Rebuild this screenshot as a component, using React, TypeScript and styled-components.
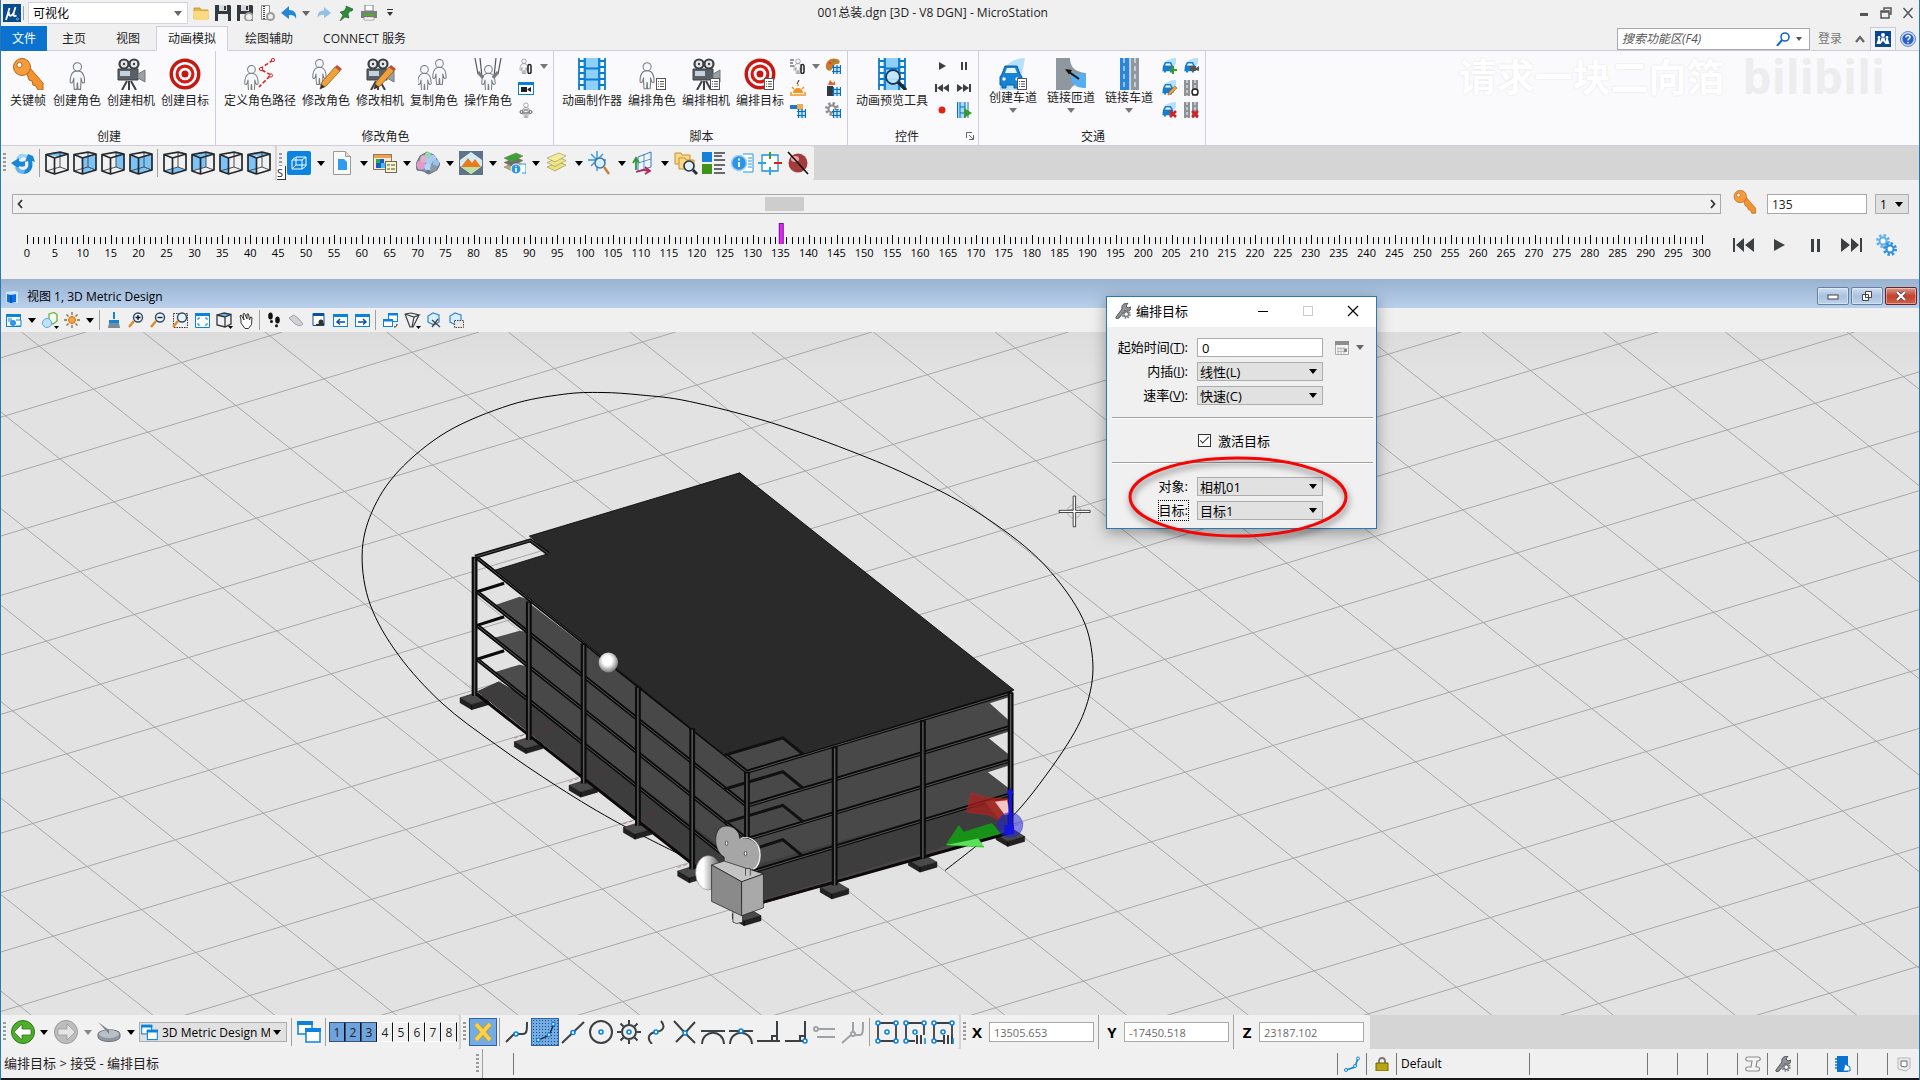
import React from "react";
import styled, { createGlobalStyle, css } from "styled-components";

const GlobalStyle = createGlobalStyle`
  *, *::before, *::after { box-sizing: border-box; }
  body { margin: 0; background: #f0f0f0; }
  body, button, input, select {
    font-family: "Open Sans", "Noto Sans CJK SC", sans-serif;
    font-size: 12px;
    color: #1e1e1e;
  }
  button { border: 0; background: none; padding: 0; cursor: default; }
  svg { display: block; flex: none; }
`;

/* ------------------------------------------------------------------ */
/* Icons                                                               */
/* ------------------------------------------------------------------ */

type Draw = React.ReactNode;

const INK = "#3c4043";
const BLUE = "#0a84d8";
const SKY = "#7cc4f8";

const Svg = ({ w, h = w, box = `0 0 ${w} ${h}`, children }: { w: number; h?: number; box?: string; children: Draw }) => (
  <svg width={w} height={h} viewBox={box} fill="none" aria-hidden="true">
    {children}
  </svg>
);

const CaretGlyph = ({ color = "#000" }: { color?: string }) => (
  <Svg w={8} h={5}>
    <path d="M0 0h8L4 5z" fill={color} />
  </Svg>
);

const Person = ({ t = "" }: { t?: string }) => (
  <g transform={t} stroke="#777b80" strokeWidth="1.2" fill="#f6f7f8" strokeLinejoin="round">
    <path d="M12 12c2-1 6-1 8 0 3 2 4 6 4 11 0 2-2 2-3 0l-1-4v5l-.5 7.500h-3l-.3-7h-.4l-.3 7h-3L12 24v-5l-1 4c-1 2-3 2-3 0 0-5 1-9 4-11z" />
    <circle cx="16" cy="6.500" r="4.600" />
  </g>
);

const Camera = () => (
  <g>
    <circle cx="9" cy="6" r="4.500" stroke={INK} strokeWidth="2.200" fill="#e6e8ea" />
    <circle cx="19" cy="6" r="4.500" stroke={INK} strokeWidth="2.200" fill="#e6e8ea" />
    <circle cx="9" cy="6" r="1.200" fill={INK} />
    <circle cx="19" cy="6" r="1.200" fill={INK} />
    <path d="M3 11h20v11H3z" fill="#5b6068" stroke={INK} />
    <path d="M5 13h10v5H5z" fill="#c4d2de" />
    <path d="M23 16l7-4v12l-7-4z" fill="#9aa1a8" stroke="#777" />
    <path d="M12 23l-5 9M14 23v9M16 23l5 9" stroke={INK} strokeWidth="2" />
  </g>
);

const Target = () => (
  <g>
    <circle cx="16" cy="16" r="15.500" fill="#c41812" />
    <circle cx="16" cy="16" r="12" fill="#fff" />
    <circle cx="16" cy="16" r="9.500" fill="#d41c14" />
    <circle cx="16" cy="16" r="6.300" fill="#fff" />
    <circle cx="16" cy="16" r="3.500" fill="#c41812" />
  </g>
);

const Pencil = ({ t = "" }: { t?: string }) => (
  <g transform={t}>
    <path d="M10 31l2-7L25 9l5 4-14 15z" fill="#f0a23a" stroke="#8a5a1e" strokeWidth=".8" />
    <path d="M25 9l2-2 5 4-2 2z" fill="#c9483c" />
    <path d="M10 31l1.500-5 3.400 3z" fill="#333" />
  </g>
);

const Sheet = () => (
  <g>
    <rect x="20.500" y="20.500" width="9" height="11" fill="#fff" stroke="#555" />
    <path d="M22 23.500h1M24 23.500h4M22 26h1M24 26h4M22 28.500h1M24 28.500h4" stroke="#555" />
  </g>
);

const Film = () => (
  <g>
    <rect x="7" y="0" width="18" height="32" fill="#8ed0fa" />
    <path d="M3 0v32M9 0v32M23 0v32M29 0v32M9 10.500h14M9 21.500h14" stroke="#0b7bd0" strokeWidth="1.800" />
    <path d="M3 3h6M3 9h6M3 15h6M3 21h6M3 27h6M23 3h6M23 9h6M23 15h6M23 21h6M23 27h6" stroke="#0b7bd0" strokeWidth="1.800" />
  </g>
);

const Lens = ({ t = "", handle = "#1d2a3a" }: { t?: string; handle?: string }) => (
  <g transform={t}>
    <path d="M22 24l7 7" stroke={handle} strokeWidth="3.500" strokeLinecap="round" />
    <circle cx="17" cy="19" r="7" fill="#cfeaff" fillOpacity=".85" stroke="#1d3c5a" strokeWidth="1.800" />
  </g>
);

const Key = () => (
  <g>
    <path d="M14 13l4-3 13 15v7h-5l-2-4-3-1-1-4-3-1z" fill="#f2932e" stroke="#b8661a" />
    <circle cx="10" cy="9" r="8.500" fill="#f79c3c" stroke="#b8661a" />
    <circle cx="7.500" cy="7" r="2.600" fill="#fff" stroke="#b8661a" />
  </g>
);

const Car = () => (
  <g>
    <path d="M3 32C2 12 12 1 26 0h2L22 32z" fill="#b8e0fb" />
    <path d="M5 16l3-8h12l3 8 2 3v8h-4v3h-4v-3H9v3H5v-3H3v-8z" fill="#1583d6" stroke="#0d5c9c" />
    <path d="M8 15l2-5h8l2 5z" fill="#e8f5ff" />
    <circle cx="7" cy="21" r="1.700" fill="#fff" />
    <circle cx="20" cy="21" r="1.700" fill="#fff" />
  </g>
);

const Gear = ({ t = "", c = "#8b8f94" }: { t?: string; c?: string }) => (
  <g transform={t}>
    <circle cx="8" cy="8" r="5.500" stroke={c} strokeWidth="3" strokeDasharray="2.300 2" />
    <circle cx="8" cy="8" r="3.500" stroke={c} strokeWidth="2" fill="#fff" />
  </g>
);

const bigIcons: Record<string, Draw> = {
  key: <Key />,
  person: <Person t="translate(2 3) scale(.9)" />,
  camera: <Camera />,
  target: <Target />,
  path: (
    <g>
      <Person t="translate(-6 6) scale(.84)" />
      <path d="M29 2L16 11l11 6-12 12" stroke="#d22" strokeWidth="1.600" strokeDasharray="4 2" />
      <circle cx="29" cy="2" r="1.600" fill="#fff" stroke="#d22" />
      <circle cx="17" cy="11" r="1.600" fill="#fff" stroke="#d22" />
      <circle cx="27" cy="17.500" r="1.600" fill="#fff" stroke="#d22" />
    </g>
  ),
  personEdit: (<g><Person t="translate(-4 0) scale(.84)" /><Pencil /></g>),
  cameraEdit: (<g><Camera /><Pencil /></g>),
  people: (<g><Person t="translate(8 0) scale(.84)" /><Person t="translate(-7 6) scale(.84)" /></g>),
  puppet: (
    <g>
      <Person t="translate(3 6) scale(.84)" />
      <path d="M3 0l3 16M8 0l2 19M29 0l-3 16M24 0l-2 19" stroke="#555" strokeWidth="1.200" />
      <path d="M6 14l5 6M26 14l-5 6" stroke="#777b80" strokeWidth="3" />
    </g>
  ),
  film: <Film />,
  personSheet: (<g><Person t="translate(-3 3) scale(.88)" /><Sheet /></g>),
  cameraSheet: (<g><Camera /><Sheet /></g>),
  targetSheet: (<g><Target /><Sheet /></g>),
  filmLens: (<g><Film /><Lens /></g>),
  carSheet: (<g><Car /><Sheet /></g>),
  ramp: (
    <g>
      <path d="M1 0h14c0 8 4 14 16 15v12c-6-2-12-2-16 5H1z" fill="#8f979f" />
      <path d="M17 14c5 3 9 2 14 1v15c-6 0-12-1-15-8z" fill="#55aef0" />
      <path d="M24 21l-10-7" stroke="#111" strokeWidth="2" />
      <path d="M10 11l7 1-3 4.500z" fill="#111" />
    </g>
  ),
  lane: (
    <g>
      <path d="M7 0h10v32H7z" fill="#2a86da" />
      <path d="M17 0h9v32h-9z" fill="#8f979f" />
      <path d="M11 0v32" stroke="#fff" strokeDasharray="5 3" />
      <path d="M22 0v32" stroke="#fff" strokeDasharray="5 3" />
      <path d="M17 0v32" stroke="#dfe4e8" strokeWidth="1.500" />
    </g>
  ),
};

const MiniFilm = () => (
  <g>
    <path d="M8 8h8v8H8z" fill="#bfe3fb" />
    <path d="M8.500 7v9M15.500 7v9M12 7v9M7 9.500h10M7 13.500h10" stroke="#0b6fc0" strokeWidth="1.200" />
  </g>
);
const MiniCar = () => (
  <g>
    <path d="M1 14C1 6 5 0 15 0v5l-5 9z" fill="#b8e0fb" />
    <path d="M2 8l2-4h6l2 4 .5 5H11v1.500H9V13H5v1.500H3V13H1.500z" fill="#1b7ccb" />
    <path d="M4 7.500l1-2h4l1 2z" fill="#fff" />
  </g>
);
const MiniRoad = () => (
  <g>
    <path d="M1 0h6v16H1zM9 0h6v16H9z" fill="#8d9299" />
    <path d="M4 0v16M12 0v16" stroke="#fff" strokeDasharray="3 2" />
  </g>
);
const Cross = () => <path d="M9 9l6 6M15 9l-6 6" stroke="#d3221c" strokeWidth="2.600" />;
const MiniPerson = () => <Person t="translate(-2 0) scale(.5)" />;

const smallIcons: Record<string, Draw> = {
  personClip: (<g><MiniPerson /><path d="M10 8v6a1.500 1.500 0 003 0V8a1.500 1.500 0 00-3 0z" stroke="#222" strokeWidth="1.500" /></g>),
  camWindow: (
    <g>
      <rect x=".5" y="2.500" width="15" height="12" fill="#fff" stroke="#0b7fd6" />
      <path d="M1 3h14v2H1z" fill="#0b7fd6" />
      <path d="M3 7h6v5H3zM9.500 9L13 7v5l-3.500-2z" fill="#222" />
    </g>
  ),
  robot: (<g><Person t="scale(.5)" /><circle cx="3.500" cy="10" r="1.500" fill="#fff" stroke="#555" /><circle cx="12.500" cy="10" r="1.500" fill="#fff" stroke="#555" /><path d="M5.500 8h5M6 11h4" stroke="#555" /></g>),
  personMove: (<g><Person t="translate(0 0) scale(.5)" /><path d="M0 2h4M0 5h3M0 8h4" stroke="#333" /><path d="M11 8v6a1.500 1.500 0 003 0V8a1.500 1.500 0 00-3 0z" stroke="#222" strokeWidth="1.500" /></g>),
  sun: (<g><path d="M3 13a5 5 0 0110 0z" fill="#f39321" /><path d="M0 13h2M14 13h2M2 7l2 2M14 7l-2 2M8 4v2M0 15h16" stroke="#f39321" strokeWidth="1.500" /><path d="M9 0L7 4" stroke="#222" /></g>),
  torch: (<g><path d="M0 3h7v4H0z" fill="#1b7ccb" /><path d="M7 2h6v6H7z" fill="#f0ac4e" /><MiniFilm /></g>),
  palette: (<g><path d="M1 10C0 3 6-1 12 1c4 1 3 5 0 5-3 0-4 2-5 5s-5 2-6-1z" fill="#c97b2b" /><circle cx="5" cy="5" r="1.200" fill="#e33" /><circle cx="9" cy="3" r="1.200" fill="#3a3" /><MiniFilm /></g>),
  crane: (<g><path d="M2 6h6v10H2z" fill="#32383f" /><path d="M3 5l2-5 3 3 2-2v4z" fill="#e8622c" /><MiniFilm /></g>),
  gearFilm: (<g><Gear t="translate(-1 -1)" /><MiniFilm /></g>),
  play: <path d="M5 4l7 4-7 4z" fill={INK} />,
  pause: <path d="M5 4h2v8H5zM9 4h2v8H9z" fill={INK} />,
  first: <path d="M1 4h2v8H1zM9 4v8L3 8zM15 4v8L9 8z" fill={INK} />,
  last: <path d="M13 4h2v8h-2zM1 4v8l6-4zM7 4v8l6-4z" fill={INK} />,
  record: <circle cx="8" cy="8" r="3.500" fill="#e02314" />,
  filmPlay: (<g><path d="M2 0h8v16H2z" fill="#a9dafa" /><path d="M1.500 0v16M4 0v16M9 0v16M12 0v16M4 5h5M4 11h5" stroke="#0b6fc0" /><path d="M8 6l8 5-8 5z" fill="#3c9a28" /></g>),
  carAdd: (<g><MiniCar /><path d="M12 8v8M8 12h8" stroke="#3a9a26" strokeWidth="2.200" /></g>),
  carCam: (<g><MiniCar /><path d="M7 8h6v5H7zM13 10l3-2v5l-3-1z" fill="#555" /></g>),
  carEdit: (<g><MiniCar /><path d="M7 15l1-3 6-6 2 2-6 6z" fill="#f0a23a" stroke="#8a5a1e" strokeWidth=".6" /></g>),
  roadGear: (<g><MiniRoad /><circle cx="12" cy="12" r="3" fill="#fff" stroke="#222" strokeWidth="1.500" /></g>),
  carDel: (<g><MiniCar /><Cross /></g>),
  roadDel: (<g><MiniRoad /><Cross /></g>),
};

const cubeFaces: Record<string, string> = {
  top: "M1 3.500L9 1 23 3 15 6z",
  front: "M8.500 7L23 3v16L9.500 23z",
  right: "M15 2L23 3v16l-8-3z",
  left: "M1 3.500L9.500 7v16L1 20z",
  back: "M1 3.500L15 1.500V16L1 20z",
  bottom: "M1 20l14-4 8 3-13.500 4z",
};

const Cube = ({ faces }: { faces: string[] }) => (
  <Svg w={24}>
    {faces.map((f) => (
      <path key={f} d={cubeFaces[f]} fill={SKY} />
    ))}
    <path d="M15 2v14M1 20l14-4 8 3" stroke="#4a4e52" />
    <path d="M1 3.500L15 1.200 23 3v16L9.500 23 1 20zM1 3.500L9.500 7 23 3M9.500 7v16" stroke="#24282c" strokeWidth="1.700" strokeLinejoin="round" />
  </Svg>
);

const Layers = ({ a, b, c }: { a: string; b: string; c: string }) => (
  <g stroke="#7a7a40" strokeWidth=".5">
    <path d="M2 16l12-5 7 3-11 6z" fill={c} />
    <path d="M2 11.500l12-5 7 3-11 6z" fill={b} />
    <path d="M2 7l12-5 7 3-11 6z" fill={a} />
  </g>
);

const barIcons: Record<string, Draw> = {
  refresh: (
    <g>
      <path d="M5 8c2-6 9-7 13-2l-2 2c-3-3-6-2-7 1z" fill="#9fd2f5" />
      <path d="M17 3l5 2 2 6-3-1c2 7-2 13-9 13l1-4c4-1 5-4 4-9l-3 1z" fill="#1a86d8" />
      <path d="M0 12l8-5v3c2 1 4 1 6 0v5c-2 1-4 1-6 0v3z" fill="#1a86d8" />
      <path d="M4 16c1 5 4 7 9 7l1-4c-4 0-6-1-6-3z" fill="#66b4ee" />
    </g>
  ),
  doc: (<g><path d="M3.500.500h12l5 5v18h-17z" fill="#fafafa" stroke="#9a9a9a" /><path d="M15.500.500v5h5" stroke="#9a9a9a" fill="#ddd" /><path d="M8 8h6l3 3v8H8z" fill="#2d9cf0" /></g>),
  attrs: (<g><rect x=".5" y="3.500" width="18" height="15" fill="#f3e9d8" stroke="#8c7a5e" /><path d="M1 4h17v3H1z" fill="#f2a14a" /><path d="M3 8h8v9H3z" fill="#1f58c8" /><path d="M3 8h4v4H3z" fill="#21b24a" /><path d="M8 12h4v5H8z" fill="#38c4f0" /><rect x="12.500" y="10.500" width="11" height="11" fill="#fff6c8" stroke="#666" /><path d="M14 14h3M18 14h4M14 18h3M18 18h4" stroke="#444" /></g>),
  sphere: (
    <g>
      <path d="M11 1l7 3 6 9-3 6-8 4-6-3-6-1-1-6 4-8z" fill="#7f93ad" stroke="#4e5a68" strokeWidth=".8" />
      <circle cx="5" cy="14" r="4.500" fill="#e39ac6" />
      <circle cx="8" cy="8" r="3.800" fill="#e7b0c8" />
      <circle cx="12" cy="4" r="3" fill="#98d6b0" />
      <circle cx="17" cy="7" r="3.300" fill="#a9ccee" />
      <circle cx="13" cy="10" r="3.500" fill="#a6cdf2" />
      <circle cx="20" cy="12" r="3.200" fill="#9cc0ee" />
      <circle cx="12" cy="16" r="3.500" fill="#b5d5f4" />
      <circle cx="17.500" cy="17" r="3.300" fill="#8c98a6" />
      <circle cx="12" cy="21" r="2.200" fill="#6f7a86" />
    </g>
  ),
  mountain: (<g><path d="M0 0h24v24H0z" fill="#5d7488" /><path d="M12 1l11 8v6l-11 8-11-8V9z" fill="#d6eaf7" /><path d="M2 16l7-9 4 5 3-4 6 8z" fill="#ea7a1c" /><path d="M2 16h20l-10 7z" fill="#bfe0a2" /></g>),
  layersInfo: (<g><Layers a="#3fa03a" b="#6b6f74" c="#b7a878" /><circle cx="14" cy="18" r="5" fill="#2b95e6" stroke="#fff" /><path d="M14 17v4M14 15v1" stroke="#fff" strokeWidth="1.600" /><path d="M18 13h6v9h-4" stroke="#2b95e6" fill="#fff" /></g>),
  layers: <Layers a="#f6ec9a" b="#f0e48a" c="#ece07c" />,
  lensStar: (<g><path d="M9 0v20M0 9h18M3 3l12 12M15 3L3 15" stroke="#2b95e6" strokeWidth="1.400" /><circle cx="12" cy="12" r="5" fill="#d6eeff" stroke="#47729a" strokeWidth="1.500" /><path d="M16 16l5 7" stroke="#c88336" strokeWidth="2.500" /></g>),
  axes: (<g><path d="M7 6l13-5v15L7 20z" stroke="#3a78c8" fill="#eef5fc" /><path d="M13 3v15M7 12l13-4" stroke="#3a78c8" strokeWidth=".8" /><path d="M5 19V8M2 12l3-5 3 5" stroke="#2d9a34" strokeWidth="1.800" /><path d="M5 21l8-2 5 1M14 16l5 4-5 3" stroke="#b52a52" strokeWidth="1.800" /></g>),
  folderLens: (<g><path d="M1 2h6l1 2h8v9H1z" fill="#f8d98a" stroke="#c9912b" /><path d="M5 7h6l1 2h8v9H5z" fill="#f8d98a" stroke="#c9912b" /><circle cx="15" cy="15" r="5" fill="#dff1ff" stroke="#28313c" strokeWidth="1.600" /><path d="M19 19l4 4" stroke="#28313c" strokeWidth="3" /></g>),
  list: (<g><path d="M0 1h10v10H0z" fill="#1581d8" /><path d="M0 13h10v10H0z" fill="#3f9417" /><path d="M12 2h11M12 5h8M12 9h11M12 14h11M12 18h8M12 22h11" stroke="#3a3e42" strokeWidth="1.500" /></g>),
  info: (<g><path d="M13 3h10v18H13" fill="#fff" stroke="#2b95e6" /><path d="M18 7h4M18 10h4M18 13h4M18 16h4" stroke="#2b95e6" /><circle cx="9" cy="12" r="7.500" fill="#2b95e6" stroke="#9fd0f6" strokeWidth="1.500" /><path d="M9 11v5M9 7.500v2" stroke="#fff" strokeWidth="2" /></g>),
  cross4: (<g><path d="M4 4h16v16H4z" fill="#fff" stroke="#1e8fe0" strokeWidth="1.300" /><path d="M12 1v7" stroke="#3aa02c" strokeWidth="2" /><path d="M16 12h8" stroke="#d3221c" strokeWidth="2" /><path d="M12 16v8M0 12h8" stroke="#2aa5f0" strokeWidth="2" /></g>),
  noSphere: (<g><circle cx="12" cy="12" r="9.500" fill="#a23c3c" /><ellipse cx="9" cy="8" rx="4" ry="3" fill="#e6a9a2" /><path d="M2 1l20 22" stroke="#111" strokeWidth="1.600" /></g>),
};

const WinBox = ({ children }: { children?: Draw }) => (
  <g>
    <rect x="1.500" y="2.500" width="14" height="12" fill="#fff" stroke="#0b82dc" />
    <path d="M1 2h15v3H1z" fill="#0b82dc" />
    {children}
  </g>
);
const MiniLens = () => (
  <g>
    <path d="M6 9l-5 6" stroke="#e08a2a" strokeWidth="2.400" />
    <circle cx="10" cy="5.500" r="4.500" fill="#e6f4ff" stroke="#2e4a68" strokeWidth="1.400" />
  </g>
);

const viewIcons: Record<string, Draw> = {
  viewAttr: (<WinBox><path d="M3 7h4M3 9h4" stroke="#0b82dc" /><circle cx="8" cy="11" r="3" fill="#2b95e6" /><path d="M11 8h5v6h-5" stroke="#0b82dc" fill="#fff" /></WinBox>),
  display: (<g><path d="M7 2l5-1.500 3 2V9l-4 3-4-2z" fill="#f4faf0" stroke="#63b43a" strokeWidth="1.300" /><circle cx="5" cy="11" r="4.500" fill="#bfe3fb" stroke="#5aa9dc" /><path d="M12 14h5l-2.500 3z" fill="#000" /></g>),
  bright: (<g><circle cx="8" cy="8" r="3.500" fill="#f6a23a" stroke="#c87a1e" /><path d="M8 0v3M8 13v3M0 8h3M13 8h3M2.500 2.500l2 2M13.500 2.500l-2 2M2.500 13.500l2-2M13.500 13.500l-2-2" stroke="#8d6a3a" strokeWidth="1.300" /></g>),
  brush: (<g><path d="M8 0v7" stroke="#1583d6" strokeWidth="2" /><path d="M3 8h10v3H3z" fill="#1583d6" /><path d="M3 11h10l1 5H2z" fill="#7b8b98" /></g>),
  zoomIn: (<g><MiniLens /><path d="M7.500 5.500h5M10 3v5" stroke="#111" strokeWidth="1.300" /></g>),
  zoomOut: (<g><MiniLens /><path d="M7.500 5.500h5" stroke="#111" strokeWidth="1.300" /></g>),
  zoomWin: (<g><rect x="1.500" y="1.500" width="14" height="14" stroke="#333" strokeDasharray="1.500 1" /><MiniLens /></g>),
  fit: (<g><path d="M1.500 1.500h14v14h-14z" fill="#fff" stroke="#0b82dc" /><path d="M1 1h15v3H1z" fill="#0b82dc" /><path d="M4 8V6h2M13 8V6h-2M4 11v2h2M13 11v2h-2" stroke="#0b82dc" /></g>),
  rotate: (<g><path d="M1 3l7-2 7 1.500L9 5z" fill="#6db8ee" /><path d="M1 3l8 2 6-2.500V12l-6 3-8-2zM9 5v10M1 3l7-2 7 1.500" stroke="#30353a" strokeWidth="1.300" /><path d="M12 14h5l-2.500 3z" fill="#000" /></g>),
  pan: <path d="M3 8l-1-4 1-1 3 5-1-6 1.500-.5L9 7l0-5 1.500 0 1 6 1-3 1.500.5-.5 7-3 4H7L3 11z" fill="#fff" stroke="#333" />,
  walk: (<g fill="#111"><ellipse cx="4.500" cy="4" rx="2.300" ry="3.600" /><circle cx="5.500" cy="9.500" r="1.500" /><ellipse cx="11.500" cy="8" rx="2.300" ry="3.600" /><circle cx="10.500" cy="13.800" r="1.500" /></g>),
  fly: <path d="M1 6l5-3 5 4 4 5-3 2-5-2z" fill="#cfd1d4" stroke="#a0a3a7" />,
  navigate: (<g><path d="M3 1.500h11v12H3z" fill="#fff" stroke="#0b4fa0" /><path d="M3 1h11v3H3z" fill="#0b4fa0" /><circle cx="11" cy="10" r="2.500" fill="#333" /><path d="M6 13l8-1" stroke="#333" strokeWidth="2" /></g>),
  prev: (<WinBox><path d="M13 10H5M8 7l-3 3 3 2.500" stroke="#0b4fa0" strokeWidth="1.500" /></WinBox>),
  next: (<WinBox><path d="M4 10h8M9 7l3 3-3 2.500" stroke="#0b4fa0" strokeWidth="1.500" /></WinBox>),
  copyView: (<g><rect x="6.500" y="1.500" width="9" height="8" fill="#fff" stroke="#0b82dc" /><path d="M6 1h10v2.500H6z" fill="#0b82dc" /><rect x="1.500" y="7.500" width="9" height="7" fill="#fff" stroke="#0b82dc" /><path d="M1 7h10v2.500H1z" fill="#0b82dc" /><path d="M12 15c2 0 3-1 3-3" stroke="#111" /></g>),
  clipMask: (<g><path d="M1 2l6-1 8 2-5 2-9-3zM1 2l5 13 3 0 6-12M10 5l-2 10" stroke="#3a3e42" strokeWidth="1.200" fill="#eef0f2" /><path d="M12 14h5l-2.500 3z" fill="#000" /></g>),
  clipVol: (<g><path d="M2 4l5-3 6 2v7l-5 3-6-3z" fill="#d9eefc" stroke="#3a8bd0" strokeWidth="1.300" /><path d="M6 8l8 7M12 7l-6 8" stroke="#444" strokeWidth="1.300" /></g>),
  clipRect: (<g><path d="M2 4l5-3 6 2v5l-5 5-6-3z" fill="#d9eefc" stroke="#3a8bd0" strokeWidth="1.300" /><rect x="6.500" y="8.500" width="9" height="7" fill="#e8e8e8" stroke="#444" strokeDasharray="1.500 1" /></g>),
};

const Dot = ({ x, y }: { x: number; y: number }) => <circle cx={x} cy={y} r="2" fill="#fff" stroke={BLUE} strokeWidth="1.600" />;
const SnapBox = ({ bars = 0 }: { bars?: number }) => (
  <g>
    <path d="M3 3h18v18H3z" stroke={INK} strokeWidth="1.800" />
    {bars > 0 && <path d="M12 15h12v9H12z" fill="#f0f0f0" />}
    {Array.from({ length: bars }, (_, i) => (
      <path key={i} d={`M${16 + i * 4 - bars} 15v9`} stroke={INK} strokeWidth="2" />
    ))}
    {bars > 0 && <path d="M22 18v6" stroke={BLUE} strokeWidth="1.500" />}
    <Dot x={3} y={3} /><Dot x={21} y={3} /><Dot x={3} y={21} /><Dot x={12} y={12} />
    {bars === 0 && <Dot x={21} y={21} />}
  </g>
);

const snapIcons: Record<string, Draw> = {
  accu: (<g><path d="M1 22l8-8h9c4 0 4-4 4-12" stroke={INK} strokeWidth="2" /><Dot x={11} y={14} /></g>),
  keypoint: (<g><path d="M5 21l12-5 6-14" stroke="#123" strokeWidth="1.500" /><Dot x={5} y={21} /><Dot x={17} y={15} /><Dot x={22} y={3} /></g>),
  mid: (<g><path d="M1 23L23 2" stroke={INK} strokeWidth="2" /><Dot x={12} y={12.5} /></g>),
  center: (<g><circle cx="12" cy="12" r="11" stroke={INK} strokeWidth="2" /><Dot x={12} y={12} /></g>),
  origin: (<g><circle cx="12" cy="12" r="7" stroke={INK} strokeWidth="2" /><path d="M12 0v4M12 20v4M0 12h4M20 12h4M3.500 3.500l3 3M20.500 3.500l-3 3M3.500 20.500l3-3M20.500 20.500l-3-3" stroke={INK} strokeWidth="2" /><Dot x={12} y={12} /></g>),
  bisector: (<g><path d="M7 24c-6-6-3-11 4-12s10-5 5-11" stroke={INK} strokeWidth="2" /><Dot x={11} y={12} /></g>),
  intersect: (<g><path d="M1 1l11 12L22 2M12 13l10 10M12 13L3 22" stroke={INK} strokeWidth="2" /><Dot x={12} y={13} /></g>),
  tangent: <path d="M0 11h24M1 24c1-15 21-15 22 0" stroke={INK} strokeWidth="2" />,
  tangentPt: (<g><path d="M0 11h24M1 24c1-15 21-15 22 0" stroke={INK} strokeWidth="2" /><Dot x={12} y={11} /></g>),
  perp: <path d="M0 21h23M20 1v20M15 21v-5h5" stroke={INK} strokeWidth="2" />,
  perpPt: (<g><path d="M0 21h20M20 1v20M15 21v-5h5" stroke={INK} strokeWidth="2" /><Dot x={20} y={21} /></g>),
  parallel: (<g stroke="#a0a3a6" strokeWidth="2"><path d="M4 9h18M4 17h18" /><circle cx="3" cy="9" r="2" fill="#fff" /></g>),
  through: (<g stroke="#a0a3a6" strokeWidth="2"><path d="M1 23l9-8h9c3 0 3-4 3-13M12 2v11" /><circle cx="12" cy="14" r="2" fill="#fff" /></g>),
  box0: <SnapBox />,
  box2: <SnapBox bars={2} />,
  box3: <SnapBox bars={3} />,
};

const ViewsGlyph = ({ size }: { size: number }) => (
  <Svg w={size} box="0 0 24 24">
    <rect x="1" y="2" width="14" height="12" fill="#fff" stroke="#0b82dc" strokeWidth="1.500" />
    <path d="M0 1h16v4H0z" fill="#0b82dc" />
    <rect x="9" y="9" width="14" height="13" fill="#fff" stroke="#0b82dc" strokeWidth="1.500" />
    <path d="M8 8h16v4H8z" fill="#0b82dc" />
  </Svg>
);

const Wrench = () => (
  <Svg w={16}>
    <path d="M1 14l6-8c-1-4 2-6 6-6l-2 3 2 2 3-1c0 4-3 5-6 4l-6 7c-1 1-4 1-3-1z" fill="#8f9397" stroke="#44474a" strokeWidth=".9" />
    <Gear t="translate(6 6) scale(.65)" c="#77797c" />
  </Svg>
);

/* ------------------------------------------------------------------ */
/* Shared pieces                                                       */
/* ------------------------------------------------------------------ */

const IconButton = styled.button<{ $w: number; $h: number }>`
  display: flex;
  align-items: center;
  justify-content: center;
  flex: none;
  width: ${(p) => p.$w}px;
  height: ${(p) => p.$h}px;
`;

const Divider = styled.span<{ $h: number }>`
  flex: none;
  width: 1px;
  height: ${(p) => p.$h}px;
  margin: 0 3px 0 2px;
  background: #a0a0a0;
`;

const Grip = styled.span`
  flex: none;
  width: 3px;
  height: 20px;
  margin: 0 3px 0 2px;
  background: repeating-linear-gradient(#9a9a9a 0 2px, transparent 2px 4px);
`;

const SelectShell = styled.div<{ $bg: string }>`
  position: relative;
  display: flex;
  align-items: center;
  height: 20px;
  background: ${(p) => p.$bg};
  border: 1px solid #acacac;
  select {
    appearance: none;
    flex: 1;
    min-width: 0;
    height: 100%;
    padding: 0 16px 0 4px;
    border: 0;
    outline: 0;
    background: transparent;
    color: #000;
    text-overflow: clip;
  }
  > svg:last-child {
    position: absolute;
    right: 5px;
    pointer-events: none;
  }
`;

const Select = ({ id, label, value, bg = "#e1e1e1", caret = "#000", icon, className }: { id: string; label?: string; value: string; bg?: string; caret?: string; icon?: Draw; className?: string }) => (
  <SelectShell $bg={bg} className={className}>
    {icon}
    <select id={id} aria-label={label} defaultValue={value}>
      <option>{value}</option>
    </select>
    <CaretGlyph color={caret} />
  </SelectShell>
);

/* ------------------------------------------------------------------ */
/* Title bar                                                           */
/* ------------------------------------------------------------------ */

const Window = styled.div`
  position: relative;
  display: flex;
  flex-direction: column;
  min-height: 100vh;
  border: 1px solid #2a78b5;
  border-width: 0 1px;
  background: #f0f0f0;
  overflow: hidden;
`;

const TitleBar = styled.header`
  display: grid;
  grid-template-columns: 15fr auto 16fr;
  align-items: center;
  height: 26px;
`;

const QuickAccess = styled.div`
  display: flex;
  align-items: center;
  padding-left: 2px;
`;

const WorkflowSelect = styled(Select)`
  width: 160px;
  height: 22px;
  margin: 0 2px 0 1px;
  border-color: #d5d3de;
`;

const DocTitle = styled.h1`
  margin: 0;
  font-size: 12px;
  font-weight: 400;
  line-height: 24px;
`;

const CaptionButtons = styled.div`
  display: flex;
  justify-content: flex-end;
  height: 24px;
`;

const MicroLogo = () => (
  <Svg w={18}>
    <path d="M0 0h18v18H0z" fill="#0a4b8c" />
    <path d="M3 16L6.500 4M6 8c-1 5 3 5 5 0l1.500-5M11 9c-1 3 0 4 2.500 2.500" stroke="#fff" strokeWidth="1.800" />
    <circle cx="14.500" cy="15" r="1" stroke="#9cc5ea" strokeWidth=".7" />
  </Svg>
);

const Floppy = () => (<g><path d="M0 0h15l1 1v15H0z" fill="#35383c" /><path d="M4 0h8v6H4z" fill="#d8dbde" /><path d="M9 1h2v4H9z" fill="#35383c" /><path d="M3 9h10v7H3z" fill="#eceeef" /></g>);

const quickIcons: { name: string; w: number; draw: Draw }[] = [
  { name: "打开", w: 22, draw: <g><path d="M1 3h6l1 2h7v9H1z" fill="#e8b44a" stroke="#c08d2e" strokeWidth=".8" /><path d="M0 6h16l-1 9H1z" fill="#fbd981" /></g> },
  { name: "保存", w: 22, draw: <Floppy /> },
  { name: "保存设置", w: 22, draw: <g><Floppy /><circle cx="12" cy="12" r="4" fill="#f0f0f0" stroke="#999ca0" strokeWidth="2" /></g> },
  { name: "压缩", w: 22, draw: <g><path d="M2.500.500h8v14h-8z" fill="#fafafa" stroke="#8b8b8b" /><path d="M5 1v13" stroke="#444" strokeDasharray="1 1" strokeWidth="2" /><circle cx="11.500" cy="11.500" r="3.500" fill="#f0f0f0" stroke="#999ca0" strokeWidth="2" /></g> },
  { name: "撤消", w: 22, draw: <path d="M0 8l8-7v4c5 0 8 3 7 9-1-4-4-4-7-4v4z" fill="#2486d8" /> },
];

const SmallTool = ({ name, w, h = 24, children }: { name: string; w: number; h?: number; children: Draw }) => (
  <IconButton $w={w} $h={h} aria-label={name}>
    {children}
  </IconButton>
);

const Title = () => (
  <TitleBar>
    <QuickAccess>
      <MicroLogo />
      <Divider $h={14} />
      <WorkflowSelect id="workflow" label="工作流" value="可视化" bg="#fff" caret="#666" />
      {quickIcons.map((q) => (
        <SmallTool key={q.name} name={q.name} w={q.w}><Svg w={16}>{q.draw}</Svg></SmallTool>
      ))}
      <SmallTool name="撤消列表" w={12}><CaretGlyph color="#666" /></SmallTool>
      <SmallTool name="重做" w={24}><Svg w={14} box="0 0 16 16"><path d="M16 8L8 1v4C3 5 0 8 1 14c1-4 4-4 7-4v4z" fill="#92c0e6" /></Svg></SmallTool>
      <SmallTool name="固定" w={22}><Svg w={16}><path d="M7 1l7 3-1 2-2 0-2 3 1 4-4-1-5 4 3-6-3-3 4-1 2-3z" fill="#2f8a3a" stroke="#1f5c28" strokeWidth=".6" /></Svg></SmallTool>
      <SmallTool name="打印" w={22}><Svg w={16}><path d="M4 0h8v6H4z" fill="#fff" stroke="#777" /><path d="M0 6h16v7H0z" fill="#7a7e82" /><path d="M3 9h10v2H3z" fill="#4fae2e" /><path d="M3 12h10v3H3z" fill="#fff" stroke="#777" strokeWidth=".6" /></Svg></SmallTool>
      <SmallTool name="自定义" w={20}><Svg w={8} h={8}><path d="M1 0h6v1H1z" fill="#333" /><path d="M1 3h6L4 7z" fill="#333" /></Svg></SmallTool>
    </QuickAccess>
    <DocTitle>001总装.dgn [3D - V8 DGN] - MicroStation</DocTitle>
    <CaptionButtons>
      <SmallTool name="最小化" w={22}><Svg w={12}><path d="M2 6h8v3H2z" fill="#555" /></Svg></SmallTool>
      <SmallTool name="还原" w={22}><Svg w={12}><path d="M4 3V1h7v6H9M1 4h8v7H1zM1 5h8" stroke="#555" strokeWidth="1.500" /></Svg></SmallTool>
      <SmallTool name="关闭" w={22}><Svg w={12}><path d="M1.500 1l9 10M10.500 1l-9 10" stroke="#555" strokeWidth="1.500" /></Svg></SmallTool>
    </CaptionButtons>
  </TitleBar>
);

/* ------------------------------------------------------------------ */
/* Ribbon                                                              */
/* ------------------------------------------------------------------ */

const TabRow = styled.nav`
  display: flex;
  align-items: stretch;
  height: 25px;
  box-shadow: inset 0 -1px #cfcddc;
`;

const Tab = styled.button<{ $kind?: "file" | "active" }>`
  padding: 0 15px 2px;
  ${(p) => p.$kind === "file" && css`
    padding: 0 11px 2px;
    background: #0b72cf;
    color: #fff;
  `}
  ${(p) => p.$kind === "active" && css`
    padding: 0 11px 2px;
    margin: 0 2px 0 1px;
    border: 1px solid #cfcddc;
    border-bottom-color: #fafafc;
    background: #fafafc;
  `}
`;

const TabTools = styled.div`
  display: flex;
  align-items: center;
  margin-left: auto;
`;

const SearchBox = styled.div`
  display: flex;
  align-items: center;
  width: 193px;
  height: 22px;
  padding-right: 1px;
  border: 1px solid #a9a9ad;
  background: #fff;
  input {
    flex: 1;
    min-width: 0;
    padding: 0 4px;
    border: 0;
    outline: 0;
    background: none;
    font-style: italic;
  }
  input::placeholder { color: #555; opacity: 1; }
`;

const SignIn = styled.button`
  width: 40px;
  padding-bottom: 2px;
  color: #777;
`;

const Community = styled.button`
  display: flex;
  align-items: center;
  justify-content: center;
  width: 26px;
  height: 24px;
  border: 1px solid #cbc9da;
  background: #f4f3fa;
`;

const RibbonBody = styled.section`
  display: flex;
  height: 95px;
  background: #fafafc;
  border-bottom: 1px solid #cfcddc;
`;

const Group = styled.section`
  display: flex;
  flex-direction: column;
  padding: 4px 4px 0 5px;
  position: relative;
  box-shadow: inset -1px 0 #cfcddc;
`;

const GroupRow = styled.div`
  display: flex;
  align-items: flex-start;
  flex: 1;
`;

const GroupName = styled.h2<{ $launcher?: boolean }>`
  margin: 0;
  padding-right: ${(p) => (p.$launcher ? 14 : 0)}px;
  font-size: 12px;
  font-weight: 400;
  line-height: 17px;
  text-align: center;
`;

const Launcher = styled.button`
  position: absolute;
  right: 5px;
  bottom: 5px;
`;

const BigButton = styled.button<{ $w: number; $drop?: boolean }>`
  display: flex;
  flex-direction: column;
  align-items: center;
  width: ${(p) => p.$w}px;
  padding-top: 3px;
  span {
    margin-top: ${(p) => (p.$drop ? 0 : 3)}px;
    line-height: 16px;
    white-space: nowrap;
  }
  svg + span + svg { margin-top: 2px; }
`;

const SmallColumn = styled.div<{ $w: number }>`
  display: grid;
  grid-auto-rows: 22px;
  width: ${(p) => p.$w}px;
`;

type BigDef = [label: string, icon: string, width: number];

const Big = ({ def, drop }: { def: BigDef; drop?: boolean }) => (
  <BigButton $w={def[2]} $drop={drop}>
    <Svg w={32}>{bigIcons[def[1]]}</Svg>
    <span>{def[0]}</span>
    {drop && <CaretGlyph color="#777" />}
  </BigButton>
);

const Small = ({ names }: { names: string[] }) => (
  <SmallColumn $w={22}>
    {names.map((n) => (
      <SmallTool key={n} name={n} w={22} h={22}><Svg w={16}>{smallIcons[n]}</Svg></SmallTool>
    ))}
  </SmallColumn>
);

const MoreColumn = () => (
  <SmallColumn $w={13}>
    <SmallTool name="更多" w={13} h={22}><CaretGlyph color="#777" /></SmallTool>
  </SmallColumn>
);

const RibbonGroup = ({ name, children, launcher }: { name: string; children: Draw; launcher?: boolean }) => (
  <Group>
    <GroupRow>{children}</GroupRow>
    <GroupName $launcher={launcher}>{name}</GroupName>
    {launcher && (
      <Launcher aria-label={`${name}设置`}>
        <Svg w={8}><path d="M.5 6V.5H6M3 3l4 4M7.500 3v4.500H3" stroke="#666" /></Svg>
      </Launcher>
    )}
  </Group>
);

const Watermark = styled.div`
  position: absolute;
  top: 51px;
  right: 34px;
  display: flex;
  align-items: center;
  gap: 18px;
  pointer-events: none;
  color: #fff;
  font-size: 38px;
  font-weight: 700;
  line-height: 50px;
  text-shadow: 0 0 2px #dcdcdc;
  span + span {
    color: #ededed;
    font-size: 46px;
    text-shadow: none;
  }
`;

const Ribbon = () => (
  <>
    <TabRow>
      <Tab $kind="file">文件</Tab>
      <Tab>主页</Tab>
      <Tab>视图</Tab>
      <Tab $kind="active">动画模拟</Tab>
      <Tab>绘图辅助</Tab>
      <Tab>CONNECT 服务</Tab>
      <TabTools>
        <SearchBox>
          <input aria-label="搜索功能区" placeholder="搜索功能区(F4)" />
          <Svg w={14}><circle cx="9" cy="5" r="4" stroke="#1767c0" strokeWidth="1.600" /><path d="M6 8l-5 6" stroke="#1767c0" strokeWidth="2" /></Svg>
          <SmallTool name="搜索选项" w={18} h={20}><Svg w={6} h={4}><path d="M0 0h6L3 4z" fill="#555" /></Svg></SmallTool>
        </SearchBox>
        <SignIn>登录</SignIn>
        <SmallTool name="折叠功能区" w={20}><Svg w={10} h={8}><path d="M1 7l4-5 4 5" stroke="#666" strokeWidth="2.200" /></Svg></SmallTool>
        <Community aria-label="社区">
          <Svg w={16}>
            <path d="M0 0h16v16H0z" fill="#08488c" />
            <circle cx="8" cy="4" r="2" fill="#fff" />
            <circle cx="4" cy="6.500" r="1.400" fill="#fff" />
            <circle cx="12" cy="6.500" r="1.400" fill="#fff" />
            <path d="M1.500 13l1.500-5h2l.5 3L6.500 6.500h3l1 4.500.5-3h2l1.500 5h-4L8 10l-2.500 3z" fill="#fff" />
          </Svg>
        </Community>
        <SmallTool name="帮助" w={23}>
          <Svg w={16}>
            <circle cx="8" cy="8" r="7.500" fill="#cfdcf5" stroke="#5f86d0" />
            <circle cx="8" cy="8" r="5.600" fill="#2a5fc4" />
            <path d="M6 6.500c0-3 4.500-2.500 4 0-.3 1.300-2 1.300-2 3M8 11v1.200" stroke="#fff" strokeWidth="1.500" />
          </Svg>
        </SmallTool>
      </TabTools>
    </TabRow>
    <RibbonBody>
      <RibbonGroup name="创建">
        <Big def={["关键帧", "key", 44]} />
        <Big def={["创建角色", "person", 54]} />
        <Big def={["创建相机", "camera", 54]} />
        <Big def={["创建目标", "target", 54]} />
      </RibbonGroup>
      <RibbonGroup name="修改角色">
        <Big def={["定义角色路径", "path", 78]} />
        <Big def={["修改角色", "personEdit", 54]} />
        <Big def={["修改相机", "cameraEdit", 54]} />
        <Big def={["复制角色", "people", 54]} />
        <Big def={["操作角色", "puppet", 54]} />
        <Small names={["personClip", "camWindow", "robot"]} />
        <MoreColumn />
      </RibbonGroup>
      <RibbonGroup name="脚本">
        <Big def={["动画制作器", "film", 66]} />
        <Big def={["编排角色", "personSheet", 54]} />
        <Big def={["编排相机", "cameraSheet", 54]} />
        <Big def={["编排目标", "targetSheet", 54]} />
        <Small names={["personMove", "sun", "torch"]} />
        <MoreColumn />
        <Small names={["palette", "crane", "gearFilm"]} />
      </RibbonGroup>
      <RibbonGroup name="控件" launcher>
        <Big def={["动画预览工具", "filmLens", 78]} />
        <Small names={["play", "first", "record"]} />
        <Small names={["pause", "last", "filmPlay"]} />
      </RibbonGroup>
      <RibbonGroup name="交通">
        <Big drop def={["创建车道", "carSheet", 58]} />
        <Big drop def={["链接匝道", "ramp", 58]} />
        <Big drop def={["链接车道", "lane", 58]} />
        <Small names={["carAdd", "carEdit", "carDel"]} />
        <Small names={["carCam", "roadGear", "roadDel"]} />
      </RibbonGroup>
    </RibbonBody>
    <Watermark>
      <span>请求一块二向箔</span>
      <span>bilibili</span>
    </Watermark>
  </>
);

/* ------------------------------------------------------------------ */
/* Attribute toolbar                                                   */
/* ------------------------------------------------------------------ */

const DockRow = styled.div`
  display: flex;
  height: 34px;
  gap: 2px;
  background: #d5d5d5;
`;

const Strip = styled.div`
  position: relative;
  display: flex;
  align-items: center;
  padding-right: 2px;
  background: #f1f1f1;
  border-radius: 0 2px 2px 0;
`;

const ActiveTool = styled.button`
  display: grid;
  place-items: center;
  flex: none;
  width: 24px;
  height: 24px;
  margin: 0 2px;
  border-radius: 2px;
  background: #0a84e0;
`;

const KeyTip = styled.span`
  position: absolute;
  left: 0;
  bottom: 0;
  width: 9px;
  border-right: 1px solid #333;
  border-bottom: 1px solid #333;
  background: #fff;
  font-size: 11px;
  line-height: 13px;
`;

const cubes = [["top"], ["front"], ["right"], ["left", "front"], ["bottom"], ["top", "back"], ["left"], ["left", "top"]];

const AttributeBar = () => (
  <DockRow>
    <Strip>
      <Grip />
      <SmallTool name="更新" w={28}><Svg w={24}>{barIcons.refresh}</Svg></SmallTool>
      <Divider $h={28} />
      {cubes.map((faces, i) => (
        <React.Fragment key={i}>
          {i === 4 && <Divider $h={28} />}
          <SmallTool name={`视图方向 ${i + 1}`} w={28}><Cube faces={faces} /></SmallTool>
        </React.Fragment>
      ))}
    </Strip>
    <Strip>
      <Grip />
      <KeyTip>S</KeyTip>
      <ActiveTool aria-label="显示样式">
        <Svg w={16}><path d="M1 5l4-3h10v9l-4 3H1zM1 5h10v9M11 5l4-3M5 2v8h10M5 10l-4 4" stroke="#fff" /></Svg>
      </ActiveTool>
      <SmallTool name="显示样式列表" w={15}><CaretGlyph /></SmallTool>
      {["doc", "attrs", "sphere", "mountain", "layersInfo", "layers", "lensStar", "axes"].map((n) => (
        <React.Fragment key={n}>
          <SmallTool name={n} w={28}><Svg w={24}>{barIcons[n]}</Svg></SmallTool>
          <SmallTool name={`${n} list`} w={15}><CaretGlyph /></SmallTool>
        </React.Fragment>
      ))}
      {["folderLens", "list", "info", "cross4", "noSphere"].map((n) => (
        <SmallTool key={n} name={n} w={28}><Svg w={24}>{barIcons[n]}</Svg></SmallTool>
      ))}
    </Strip>
  </DockRow>
);

/* ------------------------------------------------------------------ */
/* Timeline                                                            */
/* ------------------------------------------------------------------ */

const TimelinePanel = styled.section`
  display: grid;
  grid-template-columns: 1fr 184px;
  grid-template-rows: 38px 61px;
  padding: 0 10px 0 11px;
  column-gap: 2px;
`;

const ScrollTrack = styled.div`
  align-self: end;
  display: grid;
  grid-template-columns: 14px 45fr 39px 55fr 14px;
  align-items: center;
  height: 20px;
  margin: 0 2px 4px 0;
  border: 1px solid #a8a8a8;
`;

const ScrollThumb = styled.button`
  grid-column: 3;
  height: 14px;
  background: #cdcdcd;
`;

const FrameTools = styled.div`
  display: flex;
  align-items: flex-end;
  justify-content: flex-end;
  gap: 8px;
  padding-bottom: 4px;
  input {
    width: 100px;
    height: 20px;
    padding: 0 4px;
    border: 1px solid #a8a8a8;
    outline: 0;
    background: #fff;
  }
`;

const StepSelect = styled(Select)`
  width: 34px;
`;

const Ruler = styled.div`
  display: flex;
  flex-direction: column;
  padding: 5px 21px 0 15px;
`;

const RulerLabels = styled.ol`
  display: flex;
  justify-content: space-between;
  margin: 0;
  padding: 0;
  list-style: none;
  li {
    display: flex;
    justify-content: center;
    width: 0;
    font-size: 11px;
    line-height: 18px;
    color: #000;
  }
`;

const PlayTools = styled.div`
  display: flex;
  align-items: flex-start;
  padding-top: 15px;
`;

const frames = Array.from({ length: 301 }, (_, i) => i);

const Timeline = () => (
  <TimelinePanel>
    <ScrollTrack>
      <SmallTool name="向左滚动" w={14} h={18}><Svg w={6} h={10}><path d="M5 1L1.500 5 5 9" stroke="#333" strokeWidth="1.800" /></Svg></SmallTool>
      <ScrollThumb aria-label="滚动滑块" />
      <span />
      <SmallTool name="向右滚动" w={14} h={18}><Svg w={6} h={10}><path d="M1 1l3.500 4L1 9" stroke="#333" strokeWidth="1.800" /></Svg></SmallTool>
    </ScrollTrack>
    <FrameTools>
      <SmallTool name="关键帧" w={28}><Svg w={24} box="0 0 33 33"><Key /></Svg></SmallTool>
      <input aria-label="当前帧" defaultValue="135" />
      <StepSelect id="step" label="步长" value="1" />
    </FrameTools>
    <Ruler>
      <svg width="100%" height="21" overflow="visible" role="img" aria-label="时间轴">
        {frames.map((f) => (
          <rect key={f} x={`${f / 3}%`} y={f % 5 ? 14 : 12} width="1" height={f % 5 ? 7 : 9} fill="#000" shapeRendering="crispEdges" />
        ))}
        <rect x="45%" y="0" width="5" height="21" fill="#5a1a9a" transform="translate(-2 0)" />
        <rect x="45%" y="1" width="3" height="20" fill="#f21df2" transform="translate(-1 0)" />
      </svg>
      <RulerLabels>
        {frames.filter((f) => f % 5 === 0).map((f) => (
          <li key={f}>{f}</li>
        ))}
      </RulerLabels>
    </Ruler>
    <PlayTools>
      {([
        ["第一帧", "M1 3h2v14H1zM12 3v14L4 10zM22 3v14l-9-7z"],
        ["播放", "M6 4l11 6-11 6z"],
        ["暂停", "M7 4h3v13H7zM13 4h3v13h-3z"],
        ["最后一帧", "M20 3h2v14h-2zM1 3v14l9-7zM11 3v14l8-7z"],
      ] as const).map(([name, d]) => (
        <SmallTool key={name} name={name} w={36}><Svg w={23} h={20}><path d={d} fill={INK} /></Svg></SmallTool>
      ))}
      <SmallTool name="动画设置" w={36}>
        <Svg w={24}><Gear c="#5eb0ee" /><Gear t="translate(7 8)" c="#2b8fe0" /></Svg>
      </SmallTool>
    </PlayTools>
  </TimelinePanel>
);

/* ------------------------------------------------------------------ */
/* View window                                                         */
/* ------------------------------------------------------------------ */

const ViewTitle = styled.div`
  display: flex;
  align-items: center;
  height: 29px;
  padding: 6px 2px 0 4px;
  background: linear-gradient(#98b2d0, #b9d0ec);
  h2 {
    flex: 1;
    margin: 0 0 0 8px;
    padding-bottom: 2px;
    font-size: 12px;
    font-weight: 400;
    color: #000;
  }
`;

const MdiButtons = styled.div`
  display: flex;
  gap: 2px;
  padding-bottom: 2px;
`;

const MdiButton = styled.button<{ $close?: boolean }>`
  display: grid;
  place-items: center;
  width: 32px;
  height: 18px;
  border: 1px solid ${(p) => (p.$close ? "#6b2220" : "#6480a2")};
  border-radius: 2px;
  background: ${(p) => (p.$close ? "linear-gradient(#dc9a8c, #c2412b 50%, #d2614a)" : "linear-gradient(#cfdff2, #a9c2e0 50%, #bcd2ec)")};
  box-shadow: inset 0 0 0 1px #ffffff66;
`;

const ViewBar = styled.div`
  display: flex;
  align-items: center;
  height: 24px;
  padding-left: 1px;
  background: #f0f0f0;
`;

const Canvas = styled.main`
  display: flex;
  flex: 1 0 400px;
  min-height: 0;
  background: linear-gradient(#dcdcdc, #e2e2e2 40px);
  overflow: hidden;
  > svg {
    flex: 1;
    width: 100%;
    height: auto;
    min-width: 0;
  }
`;

/* Smooth curve through a list of points. */
const smooth = (pts: number[][]) =>
  pts.reduce((d, p, i) => {
    if (i === 0) return `M${p[0]} ${p[1]}`;
    const a = pts[Math.max(i - 2, 0)];
    const b = pts[i - 1];
    const n = pts[Math.min(i + 1, pts.length - 1)];
    return `${d}C${b[0] + (p[0] - a[0]) / 6} ${b[1] + (p[1] - a[1]) / 6} ${p[0] - (n[0] - b[0]) / 6} ${p[1] - (n[1] - b[1]) / 6} ${p[0]} ${p[1]}`;
  }, "");

const orbit = smooth([
  [1228, 1373], [1310, 1285], [1385, 1195], [1480, 1020], [1522, 900], [1532, 780], [1505, 650], [1420, 500], [1300, 375], [1180, 285], [1050, 208],
  [870, 120], [700, 60], [600, 42], [520, 35], [440, 40], [330, 70], [200, 145], [100, 255], [45, 370], [25, 490], [42, 630], [100, 770],
  [190, 905], [300, 1020], [430, 1140], [560, 1245], [720, 1355],
]);

const bases = [[257, 895], [369, 1018], [482, 1140], [594, 1258], [706, 1380], [819, 1500], [1000, 1425], [1182, 1350], [1363, 1278]];
const columns = [[257, 495, 885], [369, 620, 1008], [482, 738, 1130], [594, 858, 1248], [706, 975, 1370], [819, 1097, 1490], [1000, 1027, 1415], [1182, 953, 1340], [1363, 875, 1265]];
const levels = [0, 95, 189, 284];

const Scene = () => (
  <svg viewBox="1 332 1918 683" preserveAspectRatio="xMinYMin slice" role="img" aria-label="3D 视图">
    <defs>
      <radialGradient id="ball" cx=".45" cy=".4" r=".6">
        <stop offset=".4" stopColor="#fff" />
        <stop offset="1" stopColor="#777" />
      </radialGradient>
      <linearGradient id="lens" x1="0" x2="1">
        <stop offset=".3" stopColor="#fff" />
        <stop offset="1" stopColor="#555" />
      </linearGradient>
    </defs>
    <g stroke="#a8a8a8" strokeWidth="1">
      {Array.from({ length: 24 }, (_, i) => {
        const x = 21.5 + 121.7 * (i - 8);
        return <path key={i} d={`M${x} 332l864 685`} />;
      })}
      {Array.from({ length: 26 }, (_, i) => {
        const x = 86 + 196.5 * i;
        return <path key={i} d={`M${x} 332l-2265 685`} />;
      })}
    </g>
    <g transform="translate(350 380) scale(.48469 .35714)">
      <path d={orbit} stroke="#000" fill="none" vectorEffect="non-scaling-stroke" />
      <g stroke="#000" strokeWidth="1">
        {bases.map(([x, y]) => (
          <g key={x} transform={`translate(${x} ${y})`}>
            <path d="M-30-5l24 19v14l-24-19zM-6 14l35-14v14l-35 14z" fill="#222" />
            <path d="M-30-5L4-20 29 0-6 14z" fill="#4a4a4a" />
          </g>
        ))}
      </g>
      <path d="M262 872l45-28 62 50v-270l450 470 545-215v385l-544 215z" fill="#484848" />
      <path d="M760 1050l133-52 50 50-124 50z" fill="#484848" />
      <path d="M262 872l45-28 58 50 455 470 540-205v95l-540 214z" fill="#3d3d3d" />
      <path d="M300 630l50-23 19 8v92zM298 722l52-20 19 4v95zM298 818l52-21 19 5v95z" fill="#4c4c4c" />
      <path d="M1320 905l38-16v62zM1318 1003l40-18v62zM1316 1098l42-18v62z" fill="#e2e2e2" />
      <g stroke="#0a0a0a" fill="none" strokeWidth="4">
        {levels.map((dy) => (
          <g key={dy}>
            <path vectorEffect="non-scaling-stroke" d={`M262 ${498 + dy}L819 ${1097 + dy}L1367 ${874 + dy}`} />
            {dy > 0 && <path vectorEffect="non-scaling-stroke" strokeWidth="3" d={`M262 ${498 + dy}l56-24`} />}
          </g>
        ))}
        <path vectorEffect="non-scaling-stroke" strokeWidth="3" d="M262 880l557 595 544-208" />
      </g>
      <g stroke="#555" fill="none" strokeWidth="1">
        {levels.map((dy) => (
          <path key={dy} vectorEffect="non-scaling-stroke" d={`M264 ${500 + dy}L819 ${1098 + dy}L1367 ${875 + dy}`} />
        ))}
      </g>
      <path d="M804 260L370 437l42 48-114 48 474 517 121-50 42 48 435-180z" fill="#2a2a2a" stroke="#080808" strokeWidth="2" />
      <g fill="none" stroke="#111" strokeWidth="3">
        <path vectorEffect="non-scaling-stroke" strokeWidth="4" d="M258 495l114-46 38 38" />
        <path vectorEffect="non-scaling-stroke" stroke="#555" strokeWidth="1" d="M258 495l114-46 38 38" />
        {levels.map((dy) => (
          <path key={dy} vectorEffect="non-scaling-stroke" d={dy === 284 ? "M845 1308l48-21 40 45" : `M772 ${1051 + dy}l121-49 42 46`} />
        ))}
      </g>
      <path d="M262 868l545 590M262 868l-24-20M820 1478l570-238" stroke="#8a1f1f" strokeDasharray="8 5" strokeOpacity=".6" fill="none" />
      {bases.slice(1, 5).map(([x, y]) => (
        <path key={x} d={`M${x - 30} ${y - 15}l80-36`} stroke="#8a1f1f" strokeDasharray="8 5" />
      ))}
      {columns.map(([x, a, b]) => (
        <g key={x}>
          <path d={`M${x - 6} ${a}h12V${b}h-12z`} fill="#0b0b0b" />
          <path d={`M${x} ${a + 4}V${b}`} stroke="#585858" strokeWidth="3" />
        </g>
      ))}
      <g>
        <path d="M1272 1210l10-54 28 12 48 6-18 60-22-16z" fill="#b41e1e" fillOpacity=".7" stroke="#d22" />
        <path d="M1318 1182l38-6 6 40-22 4z" fill="#f3c8c4" stroke="#d22" />
        <path d="M1310 1182l18-6 22 40-10 14z" fill="#a03028" />
        <path d="M1230 1302l26-54 10 18 58-24 18 28-46 16 12 22z" fill="#10a010" fillOpacity=".85" stroke="#0c0" />
        <path d="M1230 1302l66-18 12 22z" fill="#5ce05c" />
        <ellipse cx="1362" cy="1246" rx="26" ry="35" fill="#2020e0" fillOpacity=".5" stroke="#22d" />
        <path d="M1362 1150v115" stroke="#1414e0" strokeWidth="7" />
        <path d="M1354 1160l8-20 8 20zM1350 1246h20v26h-20z" fill="#1414e0" />
      </g>
      <g stroke="#111" strokeWidth="1.500">
        <path d="M790 1484h20v34l-12 4-8-4z" fill="#d4d4d4" />
        <ellipse cx="739" cy="1380" rx="26" ry="48" fill="url(#lens)" stroke="#888" />
        <path d="M772 1350v-14c-22-18-24-76-2-86 20-6 34 14 34 34 24-10 46 20 42 54-2 28-16 40-28 34v22l-20-6z" fill="#a6a6a6" />
        <path d="M746 1358l26-11 81 36-45 22z" fill="#c4c4c4" />
        <path d="M746 1358l62 47v95l-62-40z" fill="#8a8a8a" />
        <path d="M808 1405l45-22v95l-45 22z" fill="#a9a9a9" />
        <path d="M806 1284c14-10 40 4 40 46 0 20-6 36-14 40" fill="none" stroke="#eee" strokeWidth="3" />
        <ellipse cx="777" cy="1297" rx="2.500" ry="6" fill="#fff" />
        <ellipse cx="816" cy="1326" rx="2.500" ry="6" fill="#fff" />
        <path d="M816 1388v-20h10v20" fill="#c4c4c4" />
      </g>
      <ellipse cx="533" cy="791" rx="20" ry="28" fill="url(#ball)" />
      <ellipse cx="1494" cy="368" rx="14" ry="19" stroke="#777" fill="none" />
      <path d="M1492 325h5v40h30v6h-30v40h-5v-40h-29v-6h29z" fill="#fff" stroke="#111" strokeWidth="1.800" />
    </g>
  </svg>
);

const viewTools: (string | null)[] = ["brush", "zoomIn", "zoomOut", "zoomWin", "fit", "rotate", "pan", null, "walk", "fly", "navigate", "prev", "next", null, "copyView", "clipMask", "clipVol", "clipRect"];

const ViewTool = ({ n, w = 22 }: { n: string; w?: number }) => (
  <SmallTool name={n} w={w} h={22}><Svg w={17}>{viewIcons[n]}</Svg></SmallTool>
);

const View = () => (
  <>
    <ViewTitle>
      <Svg w={14}><path d="M1 2l9-1 3 1v11H1z" fill="#cfe6fa" /><path d="M2 4l4 1 5-1v8l-5 1-4-1z" fill="#0b6fe0" /><path d="M6 5v8" stroke="#033c9c" /></Svg>
      <h2>视图 1, 3D Metric Design</h2>
      <MdiButtons>
        <MdiButton aria-label="最小化视图"><Svg w={12} h={10}><rect x="1" y="4" width="10" height="4" fill="#fff" stroke="#444" /></Svg></MdiButton>
        <MdiButton aria-label="还原视图"><Svg w={12}><path d="M4.500 1.500h6v6h-6zM1.500 4.500h6v6h-6z" fill="#fff" stroke="#444" /></Svg></MdiButton>
        <MdiButton $close aria-label="关闭视图"><Svg w={12} h={10}><path d="M2 1l8 8M10 1L2 9" stroke="#444" strokeWidth="3.600" /><path d="M2 1l8 8M10 1L2 9" stroke="#fff" strokeWidth="2.200" /></Svg></MdiButton>
      </MdiButtons>
    </ViewTitle>
    <ViewBar>
      <ViewTool n="viewAttr" />
      <SmallTool name="视图属性列表" w={15} h={22}><CaretGlyph /></SmallTool>
      <ViewTool n="display" />
      <ViewTool n="bright" />
      <SmallTool name="亮度列表" w={14} h={22}><CaretGlyph /></SmallTool>
      <Divider $h={20} />
      {viewTools.map((n, i) => (n ? <ViewTool key={n} n={n} /> : <Divider key={i} $h={20} />))}
    </ViewBar>
    <Canvas>
      <Scene />
    </Canvas>
  </>
);

/* ------------------------------------------------------------------ */
/* Script target dialog                                                */
/* ------------------------------------------------------------------ */

const Dialog = styled.section`
  position: absolute;
  left: 1105px;
  top: 296px;
  width: 271px;
  border: 1px solid #2a78b5;
  background: #f0f0f0;
  box-shadow: 0 4px 14px #00000059;
`;

const DialogTitle = styled.header`
  display: flex;
  align-items: center;
  height: 30px;
  padding: 0 0 2px 8px;
  background: #fff;
  h2 {
    flex: 1;
    margin: 0 0 0 5px;
    padding-bottom: 1px;
    font-size: 13px;
    font-weight: 400;
    color: #000;
  }
`;

const Fields = styled.div<{ $top: number; $bottom?: number }>`
  display: grid;
  grid-template-columns: 81px 126px 1fr;
  grid-auto-rows: 19px;
  align-items: center;
  column-gap: 9px;
  row-gap: 5px;
  padding: ${(p) => p.$top}px 0 ${(p) => p.$bottom ?? 0}px;
  label {
    justify-self: end;
    font-size: 13px;
    line-height: 19px;
    color: #000;
    white-space: nowrap;
  }
  input, select {
    font-size: 13px;
    color: #000;
  }
  input {
    width: 100%;
    height: 19px;
    padding: 0 4px;
    border: 1px solid #acacac;
    outline: 0;
    background: #fff;
  }
  div { height: 19px; }
  select { padding-left: 2px; }
`;

const FocusLabel = styled.label`
  outline: 1px dotted #000;
`;

const CalendarDrop = styled.button`
  display: flex;
  align-items: center;
  gap: 7px;
  padding-left: 3px;
`;

const Rule = styled.hr<{ $gap: number }>`
  margin: ${(p) => p.$gap}px 3px 0 5px;
  border: 0;
  border-top: 1px solid #a0a0a0;
  border-bottom: 1px solid #fff;
`;

const CheckLine = styled.label`
  display: flex;
  align-items: center;
  gap: 7px;
  height: 34px;
  margin-left: 91px;
  padding-top: 8px;
  font-size: 13px;
  color: #000;
  input {
    appearance: none;
    display: grid;
    place-items: center;
    width: 13px;
    height: 13px;
    margin: 0;
    border: 1px solid #333;
    background: #fff;
  }
  input:checked::after {
    content: "";
    width: 9px;
    height: 4px;
    border: 1px solid #222;
    border-width: 0 0 1px 1px;
    transform: translateY(-1px) rotate(-45deg);
  }
`;

const RedRing = styled.svg`
  position: absolute;
  left: 19px;
  top: 156px;
  overflow: visible;
  pointer-events: none;
  filter: drop-shadow(1px 4px 3px #00000080);
`;

const TargetDialog = () => (
  <Dialog role="dialog" aria-label="编排目标">
    <DialogTitle>
      <Wrench />
      <h2>编排目标</h2>
      <SmallTool name="最小化对话框" w={45}><Svg w={12}><path d="M1 6.500h10" stroke="#000" /></Svg></SmallTool>
      <SmallTool name="最大化对话框" w={45}><Svg w={12}><rect x="1.500" y="1.500" width="9" height="9" stroke="#ccc" /></Svg></SmallTool>
      <SmallTool name="关闭对话框" w={46}><Svg w={12}><path d="M1 1l10 10M11 1L1 11" stroke="#000" strokeWidth="1.200" /></Svg></SmallTool>
    </DialogTitle>
    <Fields $top={11}>
      <label htmlFor="start">起始时间(<u>T</u>):</label>
      <input id="start" defaultValue="0" />
      <CalendarDrop aria-label="选择时间">
        <Svg w={14}><path d="M.5.500h13v13H.500z" fill="#f4f4f4" stroke="#aaa" /><path d="M0 0h14v4H0z" fill="#8d8d8d" /><path d="M3 6v7M6 6v7M9 6v7M2 7.500h10M2 10.500h10" stroke="#bbb" /><path d="M9 8h3v3H9z" fill="#888" /></Svg>
        <CaretGlyph color="#666" />
      </CalendarDrop>
      <label htmlFor="interp">内插(<u>I</u>):</label>
      <Select id="interp" value="线性(L)" />
      <span />
      <label htmlFor="speed">速率(<u>V</u>):</label>
      <Select id="speed" value="快速(C)" />
    </Fields>
    <Rule $gap={12} />
    <CheckLine><input type="checkbox" defaultChecked />激活目标</CheckLine>
    <Rule $gap={9} />
    <Fields $top={13} $bottom={8}>
      <label htmlFor="object">对象:</label>
      <Select id="object" value="相机01" />
      <span />
      <FocusLabel htmlFor="aim">目标:</FocusLabel>
      <Select id="aim" value="目标1" />
    </Fields>
    <RedRing width="224" height="88" aria-hidden="true">
      <ellipse cx="112" cy="44" rx="108" ry="39" fill="none" stroke="#f40606" strokeWidth="3" />
    </RedRing>
  </Dialog>
);

/* ------------------------------------------------------------------ */
/* Bottom bars                                                         */
/* ------------------------------------------------------------------ */

const ModelSelect = styled(Select)`
  width: 148px;
  margin: 0 2px;
  > svg:first-child { margin-left: 1px; }
`;

const ViewNumber = styled.button<{ $on: boolean }>`
  width: 16px;
  height: 20px;
  border: 1px solid ${(p) => (p.$on ? "#33557e" : "#fff")};
  border-right-color: #111;
  background: ${(p) => (p.$on ? "#6fa3dd" : "#f0f0f0")};
`;

const Toggle = styled.button<{ $solid?: boolean }>`
  display: grid;
  place-items: center;
  width: 28px;
  height: 28px;
  border: 1px solid #2f63a8;
  background: #74ace6;
  ${(p) => !p.$solid && css`
    background: radial-gradient(#274a78 25%, transparent 30%) 0 0 / 3px 3px #74ace6;
  `}
`;

const Coordinate = styled.label`
  display: flex;
  align-items: center;
  height: 34px;
  padding: 0 4px 0 5px;
  gap: 4px;
  color: #000;
  font-size: 15px;
  font-weight: 700;
  &:not(:last-child) { border-right: 1px solid #a0a0a0; }
  span + & { padding-left: 0; }
  span { width: 16px; text-align: center; }
  input {
    width: 105px;
    height: 20px;
    padding: 0 4px;
    border: 1px solid #a8a8a8;
    outline: 0;
    background: #fff;
    color: #6a6a6a;
    font-size: 11px;
  }
`;

const StatusBar = styled.footer`
  display: flex;
  align-items: center;
  height: 31px;
  border-bottom: 2px solid #16181a;
`;

const StatusMessage = styled.p`
  width: 482px;
  margin: 0;
  padding-left: 3px;
  display: flex;
  justify-content: space-between;
  align-items: center;
  border-right: 1px solid #a0a0a0;
  font-size: 13px;
  line-height: 29px;
`;

const StatusPrompt = styled.span`
  flex: 1;
  height: 22px;
  margin-left: 30px;
  border-left: 1px solid #777;
`;

const StatusCell = styled.span<{ $w: number }>`
  display: flex;
  align-items: center;
  flex: none;
  width: ${(p) => p.$w}px;
  height: 22px;
  padding: 0 4px;
  border-left: 1px solid #777;
  justify-content: ${(p) => (p.$w > 40 ? "flex-start" : "center")};
  color: #000;
`;

const Arrow = ({ fill, ring }: { fill: string; ring: string }) => (
  <Svg w={24}>
    <circle cx="12" cy="12" r="11.500" fill={fill} stroke={ring} />
    <path d="M3 12l8-8v5h9v6h-9v5z" fill="#fff" stroke={ring} strokeWidth=".8" />
  </Svg>
);

const ForwardArrow = () => (
  <Svg w={24}>
    <circle cx="12" cy="12" r="11.500" fill="#bdbdbd" stroke="#9a9a9a" />
    <path d="M21 12l-8-8v5H4v6h9v5z" fill="#e6e6e6" stroke="#9a9a9a" strokeWidth=".8" />
  </Svg>
);

const statusCells: { w: number; draw?: Draw; text?: string }[] = [
  { w: 29, draw: <Svg w={16}><path d="M2 14l9-3 3-9" stroke={BLUE} strokeWidth="1.600" /><circle cx="2" cy="14" r="1.500" fill="#fff" stroke={BLUE} /><circle cx="11" cy="10" r="1.500" fill="#fff" stroke={BLUE} /><circle cx="14" cy="2.500" r="1.500" fill="#fff" stroke={BLUE} /></Svg> },
  { w: 30, draw: <Svg w={14}><path d="M4 6V4c0-4 6-4 6 0v2" stroke="#777" strokeWidth="1.800" /><path d="M1 6h12v8H1z" fill="#b9a414" stroke="#6e6208" /></Svg> },
  { w: 133, text: "Default" },
  { w: 118 }, { w: 30 }, { w: 30 }, { w: 30 },
  { w: 30, draw: <Svg w={16}><path d="M3 1h10c3 0 3 4 0 4h-1l-1 6h2c2 0 2 4 0 4H3c-3 0-3-4 0-4h3l1-6H3C0 5 0 1 3 1z" fill="#f4f4f4" stroke="#8b8b8b" strokeWidth="1.200" /></Svg> },
  { w: 30, draw: <Wrench /> },
  { w: 30 },
  { w: 30, draw: <Svg w={16}><path d="M2 0h11v16H2z" fill="#0b72cf" /><path d="M0 3h4M0 6h4M0 9h4M0 12h4" stroke="#0b72cf" strokeWidth="1.500" /><path d="M10 8l5 3v4H8l1-3z" fill="#fff" stroke="#0b72cf" /></Svg> },
  { w: 30 },
  { w: 32, draw: <Svg w={16}><path d="M2 2h12v10l-4 3-8-2z" fill="#ececec" stroke="#b5b5b5" /><path d="M5 5h6v5l-2 1-4-1z" fill="#fff" stroke="#666" /></Svg> },
];

const Bottom = () => (
  <>
    <DockRow>
      <Strip>
        <Grip />
        <SmallTool name="后退" w={28}><Arrow fill="#4fae2e" ring="#2c7a14" /></SmallTool>
        <SmallTool name="后退列表" w={14}><CaretGlyph /></SmallTool>
        <SmallTool name="前进" w={30}><ForwardArrow /></SmallTool>
        <SmallTool name="前进列表" w={13}><CaretGlyph color="#888" /></SmallTool>
        <SmallTool name="查看" w={30}>
          <Svg w={24}><path d="M1 14c0-5 22-6 22 0v3c-1 6-21 6-22 0z" fill="#8f98a2" stroke="#6b737c" /><ellipse cx="12" cy="14" rx="10" ry="4" fill="#b9c0c8" /><path d="M1 2l11 8 0 4z" fill="#7b838c" /></Svg>
        </SmallTool>
        <SmallTool name="查看列表" w={13}><CaretGlyph /></SmallTool>
        <ModelSelect id="model" label="模型" value="3D Metric Design Model" icon={<ViewsGlyph size={17} />} />
        <Divider $h={28} />
        <SmallTool name="视图组" w={28}><ViewsGlyph size={24} /></SmallTool>
        <Divider $h={28} />
        {[1, 2, 3, 4, 5, 6, 7, 8].map((n) => (
          <ViewNumber key={n} $on={n < 4}>{n}</ViewNumber>
        ))}
      </Strip>
      <Strip>
        <Grip />
        <Toggle $solid aria-label="精确捕捉开关">
          <Svg w={20}><path d="M3 2l14 16M17 2L3 18" stroke="#c99a1c" strokeWidth="5" /><path d="M3 2l14 16M17 2L3 18" stroke="#fbd24c" strokeWidth="3.600" /></Svg>
        </Toggle>
        <Divider $h={28} />
        <SmallTool name="精确捕捉" w={28}><Svg w={24}>{snapIcons.accu}</Svg></SmallTool>
        <Toggle aria-label="关键点"><Svg w={22} box="0 0 25 24">{snapIcons.keypoint}</Svg></Toggle>
        {["mid", "center", "origin", "bisector", "intersect", "tangent", "tangentPt", "perp", "perpPt", "parallel", "through"].map((n) => (
          <SmallTool key={n} name={n} w={28}><Svg w={24}>{snapIcons[n]}</Svg></SmallTool>
        ))}
        <Divider $h={28} />
        {["box0", "box2", "box3"].map((n) => (
          <SmallTool key={n} name={n} w={28}><Svg w={24}>{snapIcons[n]}</Svg></SmallTool>
        ))}
      </Strip>
      <Strip>
        <Grip />
        <Coordinate><span>X</span><input defaultValue="13505.653" /></Coordinate>
        <Coordinate><span>Y</span><input defaultValue="-17450.518" /></Coordinate>
        <Coordinate><span>Z</span><input defaultValue="23187.102" /></Coordinate>
      </Strip>
    </DockRow>
    <StatusBar>
      <StatusMessage>编排目标 &gt; 接受 - 编排目标<Grip /></StatusMessage>
      <StatusPrompt />
      {statusCells.map((c, i) => (
        <StatusCell key={i} $w={c.w}>{c.draw}{c.text}</StatusCell>
      ))}
    </StatusBar>
  </>
);

export default function App() {
  return (
    <Window>
      <GlobalStyle />
      <Title />
      <Ribbon />
      <AttributeBar />
      <Timeline />
      <View />
      <Bottom />
      <TargetDialog />
    </Window>
  );
}
